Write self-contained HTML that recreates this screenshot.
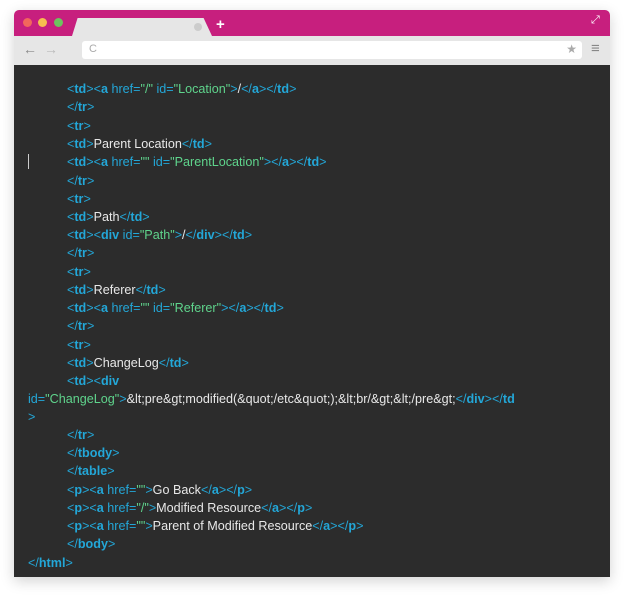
<!DOCTYPE html>
<html><head><style>
body{margin:0;background:#fff;width:624px;height:607px;position:relative;overflow:hidden;font-family:"Liberation Sans",sans-serif}
.win{position:absolute;left:14px;top:10px;width:596px;height:567px;box-shadow:0 4px 14px rgba(0,0,0,.18);border-radius:5px 5px 0 0;overflow:hidden}
.title{position:absolute;left:0;top:0;width:596px;height:26px;background:#c71f7e}
.dot{position:absolute;top:8px;width:9px;height:9px;border-radius:50%}
.tab{position:absolute;left:58px;top:8px;width:140px;height:18px;background:#e6e6e6;clip-path:polygon(4% 0,94% 0,100% 100%,0 100%)}
.tool{position:absolute;left:0;top:26px;width:596px;height:29px;background:#e6e6e6}
.url{position:absolute;left:68px;top:5px;width:500px;height:18px;background:#fff;border-radius:3px}
.code{position:absolute;left:0;top:55px;width:596px;height:512px;background:#2c2c2c}
.l{position:absolute;font-size:12.6px;color:#e8e8e8;white-space:pre;line-height:14px;letter-spacing:0}
.t{color:#23a7d8}.b{color:#23a7d8;font-weight:bold}.v{color:#5fd48c}
</style></head><body>
<div class="win">
<div class="title">
<div class="dot" style="left:9px;background:#f2665c"></div>
<div class="dot" style="left:24px;background:#f6be4f"></div>
<div class="dot" style="left:40px;background:#6dc35e"></div>
<div class="tab"><div style="position:absolute;left:122px;top:5px;width:8px;height:8px;border-radius:50%;background:#ccc"></div></div>
<div style="position:absolute;left:202px;top:6px;color:#fff;font-size:15px;font-weight:bold">+</div>
<div style="position:absolute;left:577px;top:4px;color:#fff;font-size:11px">⤢</div>
</div>
<div class="tool">
<div style="position:absolute;left:9px;top:5px;color:#888;font-size:14px">←</div>
<div style="position:absolute;left:30px;top:5px;color:#bbb;font-size:14px">→</div>
<div class="url"><span style="position:absolute;left:7px;top:2px;color:#aaa;font-size:11px">C</span><span style="position:absolute;right:5px;top:1px;color:#aaa;font-size:12px">★</span></div>
<div style="position:absolute;left:577px;top:4px;color:#888;font-size:15px">≡</div>
</div>
<div class="code"></div>
</div>
<div class="l" style="left:67px;top:82px"><span class="t">&lt;<b>td</b>&gt;&lt;<b>a</b> href=</span><span class="v">"/"</span><span class="t"> id=</span><span class="v">"Location"</span><span class="t">&gt;</span>/<span class="t">&lt;/<b>a</b>&gt;&lt;/<b>td</b>&gt;</span></div>
<div class="l t" style="left:67px;top:100px">&lt;/<b>tr</b>&gt;</div>
<div class="l t" style="left:67px;top:119px">&lt;<b>tr</b>&gt;</div>
<div class="l" style="left:67px;top:137px"><span class="t">&lt;<b>td</b>&gt;</span>Parent Location<span class="t">&lt;/<b>td</b>&gt;</span></div>
<div style="position:absolute;left:28px;top:154px;width:1px;height:15px;background:#ccc"></div>
<div class="l" style="left:67px;top:155px"><span class="t">&lt;<b>td</b>&gt;&lt;<b>a</b> href=</span><span class="v">""</span><span class="t"> id=</span><span class="v">"ParentLocation"</span><span class="t">&gt;&lt;/<b>a</b>&gt;&lt;/<b>td</b>&gt;</span></div>
<div class="l t" style="left:67px;top:174px">&lt;/<b>tr</b>&gt;</div>
<div class="l t" style="left:67px;top:192px">&lt;<b>tr</b>&gt;</div>
<div class="l" style="left:67px;top:210px"><span class="t">&lt;<b>td</b>&gt;</span>Path<span class="t">&lt;/<b>td</b>&gt;</span></div>
<div class="l" style="left:67px;top:228px"><span class="t">&lt;<b>td</b>&gt;&lt;<b>div</b> id=</span><span class="v">"Path"</span><span class="t">&gt;</span>/<span class="t">&lt;/<b>div</b>&gt;&lt;/<b>td</b>&gt;</span></div>
<div class="l t" style="left:67px;top:246px">&lt;/<b>tr</b>&gt;</div>
<div class="l t" style="left:67px;top:265px">&lt;<b>tr</b>&gt;</div>
<div class="l" style="left:67px;top:283px"><span class="t">&lt;<b>td</b>&gt;</span>Referer<span class="t">&lt;/<b>td</b>&gt;</span></div>
<div class="l" style="left:67px;top:301px"><span class="t">&lt;<b>td</b>&gt;&lt;<b>a</b> href=</span><span class="v">""</span><span class="t"> id=</span><span class="v">"Referer"</span><span class="t">&gt;&lt;/<b>a</b>&gt;&lt;/<b>td</b>&gt;</span></div>
<div class="l t" style="left:67px;top:319px">&lt;/<b>tr</b>&gt;</div>
<div class="l t" style="left:67px;top:338px">&lt;<b>tr</b>&gt;</div>
<div class="l" style="left:67px;top:356px"><span class="t">&lt;<b>td</b>&gt;</span>ChangeLog<span class="t">&lt;/<b>td</b>&gt;</span></div>
<div class="l t" style="left:67px;top:374px">&lt;<b>td</b>&gt;&lt;<b>div</b></div>
<div class="l" style="left:28px;top:392px"><span class="t">id=</span><span class="v">"ChangeLog"</span><span class="t">&gt;</span>&amp;lt;pre&amp;gt;modified(&amp;quot;/etc&amp;quot;);&amp;lt;br/&amp;gt;&amp;lt;/pre&amp;gt;<span class="t">&lt;/<b>div</b>&gt;&lt;/<b>td</b></span></div>
<div class="l t" style="left:28px;top:410px">&gt;</div>
<div class="l t" style="left:67px;top:428px">&lt;/<b>tr</b>&gt;</div>
<div class="l t" style="left:67px;top:446px">&lt;/<b>tbody</b>&gt;</div>
<div class="l t" style="left:67px;top:464px">&lt;/<b>table</b>&gt;</div>
<div class="l" style="left:67px;top:483px"><span class="t">&lt;<b>p</b>&gt;&lt;<b>a</b> href=</span><span class="v">""</span><span class="t">&gt;</span>Go Back<span class="t">&lt;/<b>a</b>&gt;&lt;/<b>p</b>&gt;</span></div>
<div class="l" style="left:67px;top:501px"><span class="t">&lt;<b>p</b>&gt;&lt;<b>a</b> href=</span><span class="v">"/"</span><span class="t">&gt;</span>Modified Resource<span class="t">&lt;/<b>a</b>&gt;&lt;/<b>p</b>&gt;</span></div>
<div class="l" style="left:67px;top:519px"><span class="t">&lt;<b>p</b>&gt;&lt;<b>a</b> href=</span><span class="v">""</span><span class="t">&gt;</span>Parent of Modified Resource<span class="t">&lt;/<b>a</b>&gt;&lt;/<b>p</b>&gt;</span></div>
<div class="l t" style="left:67px;top:537px">&lt;/<b>body</b>&gt;</div>
<div class="l t" style="left:28px;top:556px">&lt;/<b>html</b>&gt;</div>
</body></html>
